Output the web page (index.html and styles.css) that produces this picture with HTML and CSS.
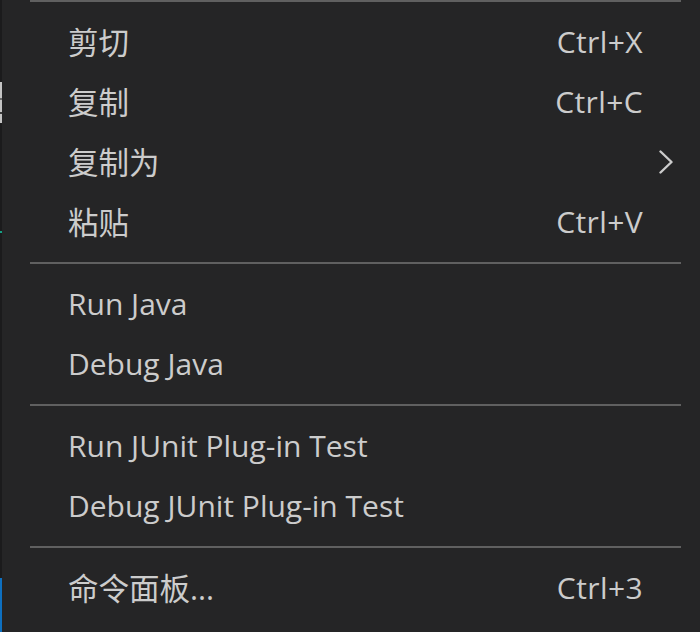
FILE: index.html
```html
<!DOCTYPE html>
<html lang="zh-CN">
<head>
<meta charset="utf-8">
<title>Context menu</title>
<link rel="stylesheet" href="styles.css">
</head>
<body>
<div class="screen">
  <div class="gutter">
    <div class="g-space g-s1"></div>
    <div class="g-slider">
      <div class="g-mark g-m1"></div>
      <div class="g-mark g-m2"></div>
    </div>
    <div class="g-space g-s2"></div>
    <div class="g-teal"></div>
    <div class="g-space g-s3"></div>
    <div class="g-blue"></div>
  </div>
  <div class="menu">
    <div class="sep sep-top"></div>
    <div class="item"><span class="label cjk">剪切</span><span class="key">Ctrl+X</span></div>
    <div class="item"><span class="label cjk">复制</span><span class="key">Ctrl+C</span></div>
    <div class="item"><span class="label cjk">复制为</span>
      <svg class="chev" width="14" height="24" viewBox="0 0 14 24"><polyline points="1.5,1.5 12.5,12 1.5,22.5" fill="none" stroke="#cccccc" stroke-width="2.4" stroke-linecap="round" stroke-linejoin="round"/></svg>
    </div>
    <div class="item"><span class="label cjk">粘贴</span><span class="key">Ctrl+V</span></div>
    <div class="sep"></div>
    <div class="item"><span class="label">Run Java</span></div>
    <div class="item"><span class="label">Debug Java</span></div>
    <div class="sep"></div>
    <div class="item"><span class="label">Run JUnit Plug-in Test</span></div>
    <div class="item"><span class="label">Debug JUnit Plug-in Test</span></div>
    <div class="sep"></div>
    <div class="item"><span class="label cjk">命令面板...</span><span class="key">Ctrl+3</span></div>
  </div>
</div>
</body>
</html>
```

FILE: styles.css
```css
html, body {
  margin: 0;
  padding: 0;
  background: #1b1b1c;
  overflow: hidden;
}

.screen {
  display: flex;
  width: 700px;
  height: 632px;
  overflow: hidden;
}

.gutter {
  flex: 0 0 2px;
  display: flex;
  flex-direction: column;
  background: #1b1b1c;
}

.g-s1 { height: 82px; }
.g-s2 { height: 108px; }
.g-s3 { height: 345px; }

.g-slider {
  height: 41px;
  background: #c4c4c4;
  display: flex;
  flex-direction: column;
}

.g-mark {
  height: 2px;
  background: #6a6a6a;
}

.g-m1 { margin-top: 16px; }
.g-m2 { margin-top: 12px; background: #3a3a3a; }

.g-teal {
  height: 2px;
  background: #16a085;
}

.g-blue {
  flex: 1;
  background: #0e70c0;
}

.menu {
  flex: 0 0 707px;
  background: #252526;
  color: #cccccc;
  font-family: "Open Sans", "Noto Sans CJK SC", sans-serif;
  font-size: 30px;
}

.sep {
  height: 2px;
  background: #606060;
  margin: 10px 28px;
}

.sep-top {
  margin-top: 0;
}

.item {
  height: 60px;
  display: flex;
  align-items: center;
  justify-content: space-between;
  padding: 0 66px;
}

.label, .key {
  line-height: 40px;
  white-space: nowrap;
}

.cjk {
  font-size: 30.5px;
}

.key {
  letter-spacing: 0.4px;
}

.chev {
  margin-right: -30px;
  display: block;
}
```
